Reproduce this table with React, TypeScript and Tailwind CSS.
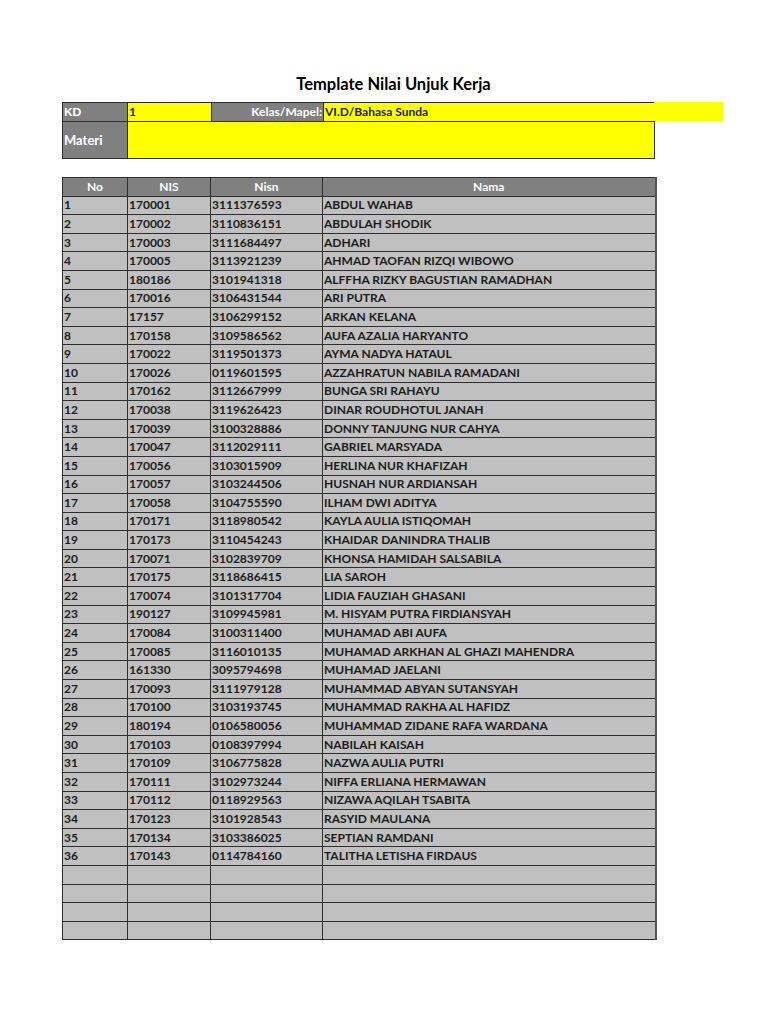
const students: [string, string, string][] = [
  ["170001", "3111376593", "ABDUL WAHAB"],
  ["170002", "3110836151", "ABDULAH SHODIK"],
  ["170003", "3111684497", "ADHARI"],
  ["170005", "3113921239", "AHMAD TAOFAN RIZQI WIBOWO"],
  ["180186", "3101941318", "ALFFHA RIZKY BAGUSTIAN RAMADHAN"],
  ["170016", "3106431544", "ARI PUTRA"],
  ["17157", "3106299152", "ARKAN KELANA"],
  ["170158", "3109586562", "AUFA AZALIA HARYANTO"],
  ["170022", "3119501373", "AYMA NADYA HATAUL"],
  ["170026", "0119601595", "AZZAHRATUN NABILA RAMADANI"],
  ["170162", "3112667999", "BUNGA SRI RAHAYU"],
  ["170038", "3119626423", "DINAR ROUDHOTUL JANAH"],
  ["170039", "3100328886", "DONNY TANJUNG NUR CAHYA"],
  ["170047", "3112029111", "GABRIEL MARSYADA"],
  ["170056", "3103015909", "HERLINA NUR KHAFIZAH"],
  ["170057", "3103244506", "HUSNAH NUR ARDIANSAH"],
  ["170058", "3104755590", "ILHAM DWI ADITYA"],
  ["170171", "3118980542", "KAYLA AULIA ISTIQOMAH"],
  ["170173", "3110454243", "KHAIDAR DANINDRA THALIB"],
  ["170071", "3102839709", "KHONSA HAMIDAH SALSABILA"],
  ["170175", "3118686415", "LIA SAROH"],
  ["170074", "3101317704", "LIDIA FAUZIAH GHASANI"],
  ["190127", "3109945981", "M. HISYAM PUTRA FIRDIANSYAH"],
  ["170084", "3100311400", "MUHAMAD ABI AUFA"],
  ["170085", "3116010135", "MUHAMAD ARKHAN AL GHAZI MAHENDRA"],
  ["161330", "3095794698", "MUHAMAD JAELANI"],
  ["170093", "3111979128", "MUHAMMAD ABYAN SUTANSYAH"],
  ["170100", "3103193745", "MUHAMMAD RAKHA AL HAFIDZ"],
  ["180194", "0106580056", "MUHAMMAD ZIDANE RAFA WARDANA"],
  ["170103", "0108397994", "NABILAH KAISAH"],
  ["170109", "3106775828", "NAZWA AULIA PUTRI"],
  ["170111", "3102973244", "NIFFA ERLIANA HERMAWAN"],
  ["170112", "0118929563", "NIZAWA AQILAH TSABITA"],
  ["170123", "3101928543", "RASYID MAULANA"],
  ["170134", "3103386025", "SEPTIAN RAMDANI"],
  ["170143", "0114784160", "TALITHA LETISHA FIRDAUS"],
];

const cell = "border border-[#2e2e2e] px-[1px] py-0 leading-none";

export default function App() {
  return (
    <div
      className="w-[768px] min-h-[1024px] bg-white text-[12px] text-[#1c1c1c] font-bold"
      style={{ fontFamily: "Lato, 'Liberation Sans', sans-serif" }}
    >
      <div className="pt-[74px] pl-[62px]">
        <h1 className="w-[663px] text-center text-[16.5px] font-bold text-black leading-[20px]">
          Template Nilai Unjuk Kerja
        </h1>

        {/* Header info block */}
        <div className="relative mt-[8px] w-[592px]">
          <div className="absolute left-[592px] top-0 h-[19px] w-[69px] bg-[#ffff00]" />
          <table className="w-[592px] table-fixed border-collapse">
            <colgroup>
              <col className="w-[65px]" />
              <col className="w-[84px]" />
              <col className="w-[112px]" />
              <col className="w-[331px]" />
            </colgroup>
            <tbody>
              <tr className="h-[19px]">
                <td className={`${cell} bg-[#808080] text-white`}>KD</td>
                <td className={`${cell} bg-[#ffff00]`}>1</td>
                <td className={`${cell} bg-[#808080] text-white text-right`}>Kelas/Mapel:</td>
                <td className={`${cell} bg-[#ffff00]`}>VI.D/Bahasa Sunda</td>
              </tr>
              <tr className="h-[37px]">
                <td className={`${cell} bg-[#808080] text-white text-[13px]`}>Materi</td>
                <td className={`${cell} bg-[#ffff00]`} colSpan={3}></td>
              </tr>
            </tbody>
          </table>
        </div>

        {/* Student list */}
        <table className="mt-[18px] w-[593px] table-fixed border-collapse border-r-2 border-r-[#555]">
          <colgroup>
            <col className="w-[65px]" />
            <col className="w-[83px]" />
            <col className="w-[112px]" />
            <col className="w-[333px]" />
          </colgroup>
          <thead>
            <tr className="h-[18.6px] bg-[#808080] text-white">
              <th className={`${cell} text-center`}>No</th>
              <th className={`${cell} text-center`}>NIS</th>
              <th className={`${cell} text-center`}>Nisn</th>
              <th className={`${cell} text-center`}>Nama</th>
            </tr>
          </thead>
          <tbody>
            {students.map(([nis, nisn, nama], i) => (
              <tr key={nis + nama} className="h-[18.6px] bg-[#c0c0c0]">
                <td className={cell}>{i + 1}</td>
                <td className={cell}>{nis}</td>
                <td className={cell}>{nisn}</td>
                <td className={cell}>{nama}</td>
              </tr>
            ))}
            {[0, 1, 2, 3].map((k) => (
              <tr key={"empty" + k} className="h-[18.6px] bg-[#c0c0c0]">
                <td className={cell}></td>
                <td className={cell}></td>
                <td className={cell}></td>
                <td className={cell}></td>
              </tr>
            ))}
          </tbody>
        </table>
      </div>
    </div>
  );
}
